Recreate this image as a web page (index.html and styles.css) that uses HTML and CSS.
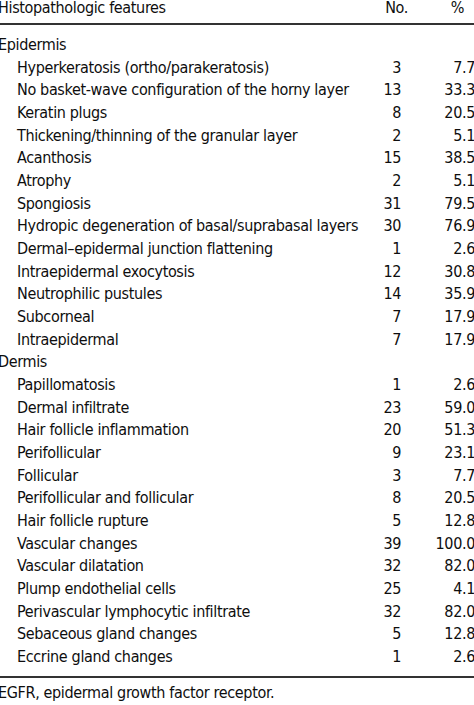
FILE: index.html
```html
<!DOCTYPE html>
<html lang="en">
<head>
<meta charset="utf-8">
<title>Histopathologic features</title>
<link rel="stylesheet" href="styles.css">
</head>
<body>
<div class="sheet">
  <div class="table">
    <div class="head">
      <span class="c-label">Histopathologic features</span>
      <span class="c-no">No.</span>
      <span class="c-pct">%</span>
    </div>
    <div class="body">
      <div class="row group"><span class="c-label">Epidermis</span><span class="c-no"></span><span class="c-pct"></span></div>
      <div class="row"><span class="c-label sub">Hyperkeratosis (ortho/parakeratosis)</span><span class="c-no">3</span><span class="c-pct">7.7</span></div>
      <div class="row"><span class="c-label sub">No basket-wave configuration of the horny layer</span><span class="c-no">13</span><span class="c-pct">33.3</span></div>
      <div class="row"><span class="c-label sub">Keratin plugs</span><span class="c-no">8</span><span class="c-pct">20.5</span></div>
      <div class="row"><span class="c-label sub">Thickening/thinning of the granular layer</span><span class="c-no">2</span><span class="c-pct">5.1</span></div>
      <div class="row"><span class="c-label sub">Acanthosis</span><span class="c-no">15</span><span class="c-pct">38.5</span></div>
      <div class="row"><span class="c-label sub">Atrophy</span><span class="c-no">2</span><span class="c-pct">5.1</span></div>
      <div class="row"><span class="c-label sub">Spongiosis</span><span class="c-no">31</span><span class="c-pct">79.5</span></div>
      <div class="row"><span class="c-label sub">Hydropic degeneration of basal/suprabasal layers</span><span class="c-no">30</span><span class="c-pct">76.9</span></div>
      <div class="row"><span class="c-label sub">Dermal–epidermal junction flattening</span><span class="c-no">1</span><span class="c-pct">2.6</span></div>
      <div class="row"><span class="c-label sub">Intraepidermal exocytosis</span><span class="c-no">12</span><span class="c-pct">30.8</span></div>
      <div class="row"><span class="c-label sub">Neutrophilic pustules</span><span class="c-no">14</span><span class="c-pct">35.9</span></div>
      <div class="row"><span class="c-label sub">Subcorneal</span><span class="c-no">7</span><span class="c-pct">17.9</span></div>
      <div class="row"><span class="c-label sub">Intraepidermal</span><span class="c-no">7</span><span class="c-pct">17.9</span></div>
      <div class="row group"><span class="c-label">Dermis</span><span class="c-no"></span><span class="c-pct"></span></div>
      <div class="row"><span class="c-label sub">Papillomatosis</span><span class="c-no">1</span><span class="c-pct">2.6</span></div>
      <div class="row"><span class="c-label sub">Dermal infiltrate</span><span class="c-no">23</span><span class="c-pct">59.0</span></div>
      <div class="row"><span class="c-label sub">Hair follicle inflammation</span><span class="c-no">20</span><span class="c-pct">51.3</span></div>
      <div class="row"><span class="c-label sub">Perifollicular</span><span class="c-no">9</span><span class="c-pct">23.1</span></div>
      <div class="row"><span class="c-label sub">Follicular</span><span class="c-no">3</span><span class="c-pct">7.7</span></div>
      <div class="row"><span class="c-label sub">Perifollicular and follicular</span><span class="c-no">8</span><span class="c-pct">20.5</span></div>
      <div class="row"><span class="c-label sub">Hair follicle rupture</span><span class="c-no">5</span><span class="c-pct">12.8</span></div>
      <div class="row"><span class="c-label sub">Vascular changes</span><span class="c-no">39</span><span class="c-pct">100.0</span></div>
      <div class="row"><span class="c-label sub">Vascular dilatation</span><span class="c-no">32</span><span class="c-pct">82.0</span></div>
      <div class="row"><span class="c-label sub">Plump endothelial cells</span><span class="c-no">25</span><span class="c-pct">4.1</span></div>
      <div class="row"><span class="c-label sub">Perivascular lymphocytic infiltrate</span><span class="c-no">32</span><span class="c-pct">82.0</span></div>
      <div class="row"><span class="c-label sub">Sebaceous gland changes</span><span class="c-no">5</span><span class="c-pct">12.8</span></div>
      <div class="row"><span class="c-label sub">Eccrine gland changes</span><span class="c-no">1</span><span class="c-pct">2.6</span></div>
    </div>
  </div>
  <p class="note">EGFR, epidermal growth factor receptor.</p>
</div>
</body>
</html>
```

FILE: styles.css
```css
html, body {
  margin: 0;
  padding: 0;
  background: #ffffff;
  overflow: hidden;
}

.sheet {
  width: 479px;
  margin-left: -2px;
  font-family: "DejaVu Sans Condensed", "Liberation Sans", sans-serif;
  font-size: 16px;
  letter-spacing: -0.35px;
  color: #0e0e0e;
}

.head,
.row {
  display: grid;
  grid-template-columns: minmax(0, 1fr) 43px 69px;
  white-space: nowrap;
}

.head {
  line-height: 15.5px;
  padding-bottom: 7.5px;
  border-bottom: 2px solid #333333;
}

.body {
  padding-top: 9.1px;
  padding-bottom: 7.2px;
  border-bottom: 2px solid #333333;
}

.row {
  height: 22.667px;
  line-height: 22.667px;
}

.c-no {
  text-align: right;
  padding-right: 7px;
}

.c-pct {
  text-align: right;
  padding-right: 2px;
}

.head .c-no {
  padding-right: 0;
}

.head .c-pct {
  padding-right: 13px;
}

.sub {
  padding-left: 19px;
}

.note {
  margin: 0;
  padding-top: 4.1px;
  line-height: 22.667px;
}
```
